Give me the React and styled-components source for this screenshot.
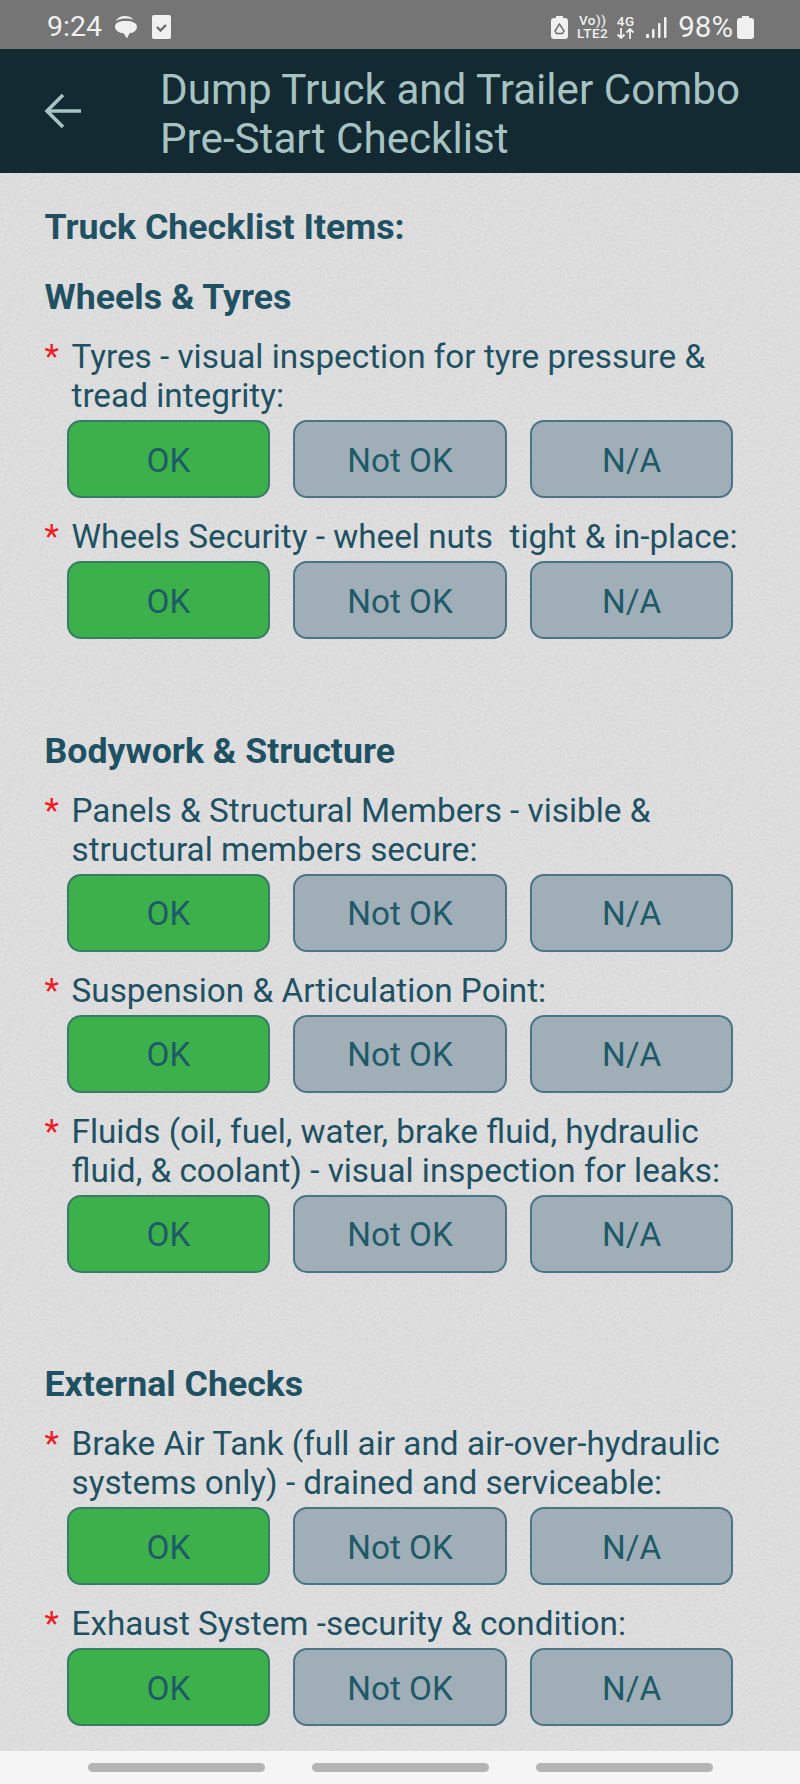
import React from 'react';
import styled, { createGlobalStyle } from 'styled-components';

const noise = `url("data:image/svg+xml,%3Csvg xmlns='http://www.w3.org/2000/svg' width='240' height='240'%3E%3Cfilter id='n'%3E%3CfeTurbulence type='fractalNoise' baseFrequency='0.45' numOctaves='3' stitchTiles='stitch'/%3E%3CfeColorMatrix values='0 0 0 0 0.55 0 0 0 0 0.55 0 0 0 0 0.55 0.5 0.5 0 0 -0.38'/%3E%3C/filter%3E%3Crect width='240' height='240' filter='url(%23n)'/%3E%3C/svg%3E")`;

const GlobalStyle = createGlobalStyle`
  html, body {
    margin: 0;
    padding: 0;
    background: #e0e0e0;
  }
  * {
    box-sizing: border-box;
  }
`;

const Screen = styled.div`
  width: 800px;
  height: 1784px;
  display: flex;
  flex-direction: column;
  overflow: hidden;
  font-family: Roboto, "Liberation Sans", sans-serif;
`;

const StatusBar = styled.div`
  height: 49px;
  flex: none;
  background: #757575;
  color: #f0f0f0;
  display: flex;
  align-items: center;
  justify-content: space-between;
  padding: 5px 46px 0 47px;
`;

const StatusGroup = styled.div`
  display: flex;
  align-items: center;
`;

const StatusText = styled.span`
  font-size: ${p => p.$size || 29.5}px;
  line-height: 32px;
  margin-right: ${p => p.$gap || 0}px;
`;

const NetworkLabel = styled.div`
  display: flex;
  flex-direction: column;
  align-items: center;
  font-size: 13.5px;
  line-height: 13px;
  letter-spacing: 0.5px;
  font-weight: 500;
  margin-right: ${p => p.$gap || 0}px;
`;

const Header = styled.header`
  height: 124px;
  flex: none;
  background: #132a33;
  color: #a6c3c2;
  display: flex;
  align-items: center;
  padding: 0 0 0 44px;
`;

const BackIcon = styled.svg`
  width: 37px;
  height: 36px;
  margin-right: 79px;
  flex: none;
`;

const Title = styled.h1`
  margin: 0;
  padding-top: 5px;
  font-size: 42.2px;
  line-height: 49px;
  font-weight: 400;
  width: 625px;
`;

const Content = styled.main`
  flex: 1;
  min-height: 0;
  overflow: hidden;
  background-color: #e0e0e0;
  background-image: ${noise};
  padding: 32px 0 0 44.5px;
  color: #1f5163;
`;

const PageHeading = styled.h2`
  margin: 0 0 26px;
  font-size: 35.7px;
  line-height: 44px;
  font-weight: 700;
`;

const Section = styled.section`
  margin-bottom: 89.5px;
`;

const SectionHeading = styled.h3`
  margin: 0 0 18px;
  font-size: 35.7px;
  line-height: 44px;
  font-weight: 700;
`;

const Item = styled.div`
  margin-bottom: 19px;
`;

const Label = styled.div`
  display: flex;
  width: 710px;
  font-size: 33.3px;
  line-height: 39px;
  margin-bottom: 5px;
`;

const Star = styled.span`
  width: 27px;
  flex: none;
  color: #ee1c25;
`;

const ButtonRow = styled.div`
  display: grid;
  grid-template-columns: 203px 214px 203px;
  column-gap: 23px;
  margin-left: 22.5px;
`;

const Choice = styled.button`
  height: 78px;
  padding: 2px 0 0;
  border: 2px solid ${p => (p.$selected ? '#3a7a68' : '#4b7487')};
  border-radius: 14px;
  background: ${p => (p.$selected ? '#3cb04a' : '#a0aeb8')};
  color: #1f5a68;
  font-family: inherit;
  font-size: 33.3px;
`;

const BottomNav = styled.nav`
  height: 33px;
  flex: none;
  background: #f5f5f5;
  display: flex;
  justify-content: center;
  gap: 47px;
  padding-top: 12px;
`;

const NavPill = styled.span`
  width: 177px;
  height: 9px;
  border-radius: 5px;
  background: #b5b5b5;
`;

const BubbleIcon = () => (
  <svg width="24" height="24" viewBox="0 0 24 24" fill="#f0f0f0" style={{ marginRight: 14 }}>
    <path d="M1.500 6c1.500-3 5-5 9-5 4 0 7 1 9 3.500-4-1.500-11-1.500-15 0-1 .4-2 .8-3 1.500z" />
    <path d="M1 11.500C1 8 5 6 11.500 6S23 8 23 11.500c0 4-3.500 6.500-7.500 6.800L13 23.500l-3.500-5.300C5 18 1 15.500 1 11.500z" />
  </svg>
);

const CheckIcon = () => (
  <svg width="19" height="24" viewBox="0 0 19 24">
    <rect x="0" y="0" width="19" height="24" rx="2" fill="#f0f0f0" />
    <path d="M5 12l3.500 3.500L14 10" fill="none" stroke="#6b6b6b" strokeWidth="2.4" />
  </svg>
);

const RecycleBatteryIcon = () => (
  <svg width="17" height="23" viewBox="0 0 17 23" style={{ marginRight: 9 }}>
    <path d="M5 0h7v2h2a3 3 0 0 1 3 3v15a3 3 0 0 1-3 3H3a3 3 0 0 1-3-3V5a3 3 0 0 1 3-3h2z" fill="#f0f0f0" />
    <path d="M8.500 8L4 15l1.500 2.500h6L13 15z" fill="none" stroke="#6b6b6b" strokeWidth="1.4" />
  </svg>
);

const DataArrows = () => (
  <svg width="19" height="11" viewBox="0 0 19 11" fill="none" stroke="#f0f0f0" strokeWidth="1.800">
    <path d="M5 0v10M1.500 6.500L5 10l3.500-3.500" />
    <path d="M14 11V1M10.500 4.500L14 1l3.500 3.500" />
  </svg>
);

const SignalIcon = () => (
  <svg width="21" height="21" viewBox="0 0 21 21" fill="#f0f0f0" style={{ marginRight: 11 }}>
    <rect x="0" y="17" width="3" height="4" rx="1" />
    <rect x="6" y="12" width="2.500" height="9" rx="1" />
    <rect x="12" y="6" width="2.500" height="15" rx="1" />
    <rect x="18" y="0" width="2.500" height="21" rx="1" />
  </svg>
);

const BatteryIcon = () => (
  <svg width="17" height="23" viewBox="0 0 17 23" fill="#f0f0f0">
    <path d="M5 0h7v2h2a3 3 0 0 1 3 3v15a3 3 0 0 1-3 3H3a3 3 0 0 1-3-3V5a3 3 0 0 1 3-3h2z" />
  </svg>
);

const checklist = [
  {
    name: 'Wheels & Tyres',
    items: [
      'Tyres - visual inspection for tyre pressure & tread integrity:',
      'Wheels Security - wheel nuts\u00a0 tight & in-place:',
    ],
  },
  {
    name: 'Bodywork & Structure',
    items: [
      'Panels & Structural Members - visible & structural members secure:',
      'Suspension & Articulation Point:',
      'Fluids (oil, fuel, water, brake fluid, hydraulic fluid, & coolant) - visual inspection for leaks:',
    ],
  },
  {
    name: 'External Checks',
    items: [
      'Brake Air Tank (full air and air-over-hydraulic systems only) - drained and serviceable:',
      'Exhaust System -security & condition:',
      'Steps, Guards & Handrails - condition:',
    ],
  },
];

const App = () => {
  return (
    <Screen>
      <GlobalStyle />
      <StatusBar>
        <StatusGroup>
          <StatusText $size={28.5} $gap={12}>9:24</StatusText>
          <BubbleIcon />
          <CheckIcon />
        </StatusGroup>
        <StatusGroup>
          <RecycleBatteryIcon />
          <NetworkLabel $gap={8}>
            <span>Vo))</span>
            <span>LTE2</span>
          </NetworkLabel>
          <NetworkLabel $gap={11}>
            <span>4G</span>
            <DataArrows />
          </NetworkLabel>
          <SignalIcon />
          <StatusText $gap={4}>98%</StatusText>
          <BatteryIcon />
        </StatusGroup>
      </StatusBar>

      <Header>
        <BackIcon viewBox="0 0 37 36" fill="none" stroke="#a6c3c2" strokeWidth="3.6">
          <path d="M19 2L3 18l16 16" />
          <path d="M3 18h34" />
        </BackIcon>
        <Title>Dump Truck and Trailer Combo Pre-Start Checklist</Title>
      </Header>

      <Content>
        <PageHeading>Truck Checklist Items:</PageHeading>
        {checklist.map(section => (
          <Section key={section.name}>
            <SectionHeading>{section.name}</SectionHeading>
            {section.items.map(item => (
              <Item key={item}>
                <Label>
                  <Star>*</Star>
                  <span>{item}</span>
                </Label>
                <ButtonRow>
                  <Choice $selected>OK</Choice>
                  <Choice>Not OK</Choice>
                  <Choice>N/A</Choice>
                </ButtonRow>
              </Item>
            ))}
          </Section>
        ))}
      </Content>

      <BottomNav>
        <NavPill />
        <NavPill />
        <NavPill />
      </BottomNav>
    </Screen>
  );
};

export default App;
